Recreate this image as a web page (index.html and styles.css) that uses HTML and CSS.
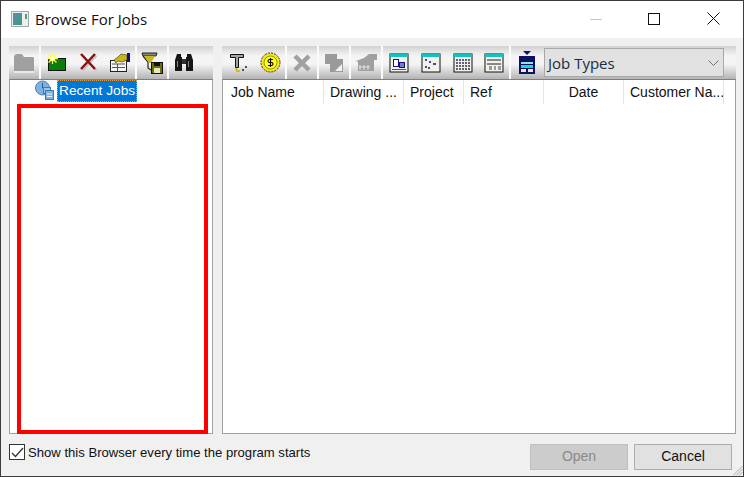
FILE: index.html
```html
<!DOCTYPE html>
<html lang="en">
<head>
<meta charset="utf-8">
<title>Browse For Jobs</title>
<link rel="stylesheet" href="styles.css">
</head>
<body>
<div class="window">
  <header class="titlebar">
    <svg class="app-icon" width="18" height="17" viewBox="0 0 18 17">
      <defs><linearGradient id="appgrad" x1="0" y1="0" x2="1" y2="1"><stop offset="0" stop-color="#5a8fb4"/><stop offset="1" stop-color="#3f9a78"/></linearGradient></defs>
      <rect x="0.5" y="0.500" width="17" height="15" fill="#eef0f0" stroke="#a4a8aa"/>
      <rect x="2" y="2" width="9" height="12" fill="url(#appgrad)"/>
      <rect x="14" y="3" width="2" height="5" fill="#49a088"/>
    </svg>
    <span class="title">Browse For Jobs</span>
    <div class="caption">
      <span class="cap-btn cap-min"><svg width="12" height="12" viewBox="0 0 12 12"><path d="M0 6.500h12" stroke="#c4c4c4"/></svg></span>
      <span class="cap-btn cap-max"><svg width="12" height="12" viewBox="0 0 12 12"><rect x="0.5" y="0.5" width="11" height="11" fill="none" stroke="#111"/></svg></span>
      <span class="cap-btn cap-close"><svg width="13" height="13" viewBox="0 0 13 13"><path d="M0.5 0.5l12 12M12.5 0.5l-12 12" stroke="#111" fill="none"/></svg></span>
    </div>
  </header>

  <main class="content">
    <div class="panes">
      <section class="pane pane-left">
        <div class="toolbar">
          <span class="tb tb-w32 sep"><svg width="22" height="20" viewBox="0 0 22 20"><path d="M1 18V3l2-2h6l2 3h9l1 1v13z" fill="#a0a0a0"/><path d="M1 19h20" stroke="#fff"/></svg></span>
          <span class="tb tb-w32"><svg width="20" height="19" viewBox="0 0 20 19"><rect x="1.500" y="5.500" width="17" height="12" fill="#0a7d0a" stroke="#111"/><path d="M5.500 0v11M0 5.500h11M1.500 1.500l8 8M9.500 1.500l-8 8" stroke="#ffff30" stroke-width="1.300"/><circle cx="5.500" cy="5.500" r="2.500" fill="#ffffd0"/></svg></span>
          <span class="tb tb-w32"><svg width="20" height="19" viewBox="0 0 20 19"><path d="M2 2l14 15M16 2L2 17" stroke="#c4c4c4" stroke-width="2.200" transform="translate(1.500 0.500)"/><path d="M2 1l14 15M16 1L2 16" stroke="#8a1010" stroke-width="2.400"/></svg></span>
          <span class="tb tb-w32 sep"><svg width="22" height="20" viewBox="0 0 22 20"><rect x="1.500" y="7.500" width="16" height="11" fill="#f4f4f4" stroke="#222"/><path d="M3 11h13M3 14.500h13M8.500 11v7" stroke="#555"/><path d="M5 7l4-3 3-3 6 1v5l-5 2-4-1-2 2z" fill="#c8b420" stroke="#5a4a00" stroke-width=".7"/><path d="M18 0h3v9h-3z" fill="#101080"/></svg></span>
          <span class="tb tb-w32 sep"><svg width="22" height="22" viewBox="0 0 22 22"><path d="M1 1h15l-1 3H2z" fill="#8a8a70" stroke="#222"/><path d="M2 4l5 6v6l3 2" fill="none" stroke="#222" stroke-width="1.200"/><path d="M3 4h11l-4 7H8z" fill="#c8b828"/><rect x="10.500" y="10.500" width="11" height="11" fill="#70700a" stroke="#111"/><rect x="13" y="11" width="6" height="3" fill="#111"/><rect x="13" y="16" width="6" height="5" fill="#e8e8c0"/></svg></span>
          <span class="tb tb-last"><svg width="20" height="19" viewBox="0 0 20 19"><path d="M3 1h4v3h1v14H1V7zM17 1h-4v3h-1v14h7V7z" fill="#161616"/><rect x="8" y="6" width="4" height="5" fill="#333"/><path d="M3.500 8v6M14.500 8v6" stroke="#888"/></svg></span>
        </div>
        <div class="tree">
          <div class="tree-row">
            <svg width="20" height="22" viewBox="0 0 20 22"><circle cx="7.500" cy="8" r="7" fill="#7fb2de" stroke="#4f82ba"/><path d="M7.500 3v5l3 2" stroke="#2f5f9a" fill="none"/><rect x="8.500" y="7.500" width="7" height="6" fill="#9cc4e8" stroke="#3f78b8"/><rect x="10.500" y="10.500" width="8" height="9" fill="#7fb2de" stroke="#3f78b8"/><path d="M12 14h5M12 16.500h5" stroke="#e8f2fa"/></svg>
            <span class="tree-label">Recent Jobs</span>
          </div>
          <div class="highlight"></div>
        </div>
      </section>

      <section class="pane pane-right">
        <div class="toolbar toolbar-right">
          <span class="tb tb-w32"><svg width="20" height="20" viewBox="0 0 20 20"><path d="M1.500 1.500h13v3h-5v10h-3v-10h-5z" fill="#a4a4a4" stroke="#111"/><path d="M7 15l1 3h3" stroke="#c8b800" stroke-width="1.600" fill="none"/><path d="M13 17h2M16 14h2" stroke="#222" stroke-width="1.400"/></svg></span>
          <span class="tb tb-w32 sep"><svg width="21" height="21" viewBox="0 0 21 21"><circle cx="10.500" cy="10.500" r="9.500" fill="#f4e818" stroke="#333" stroke-dasharray="2 1"/><circle cx="10.500" cy="10.500" r="6.500" fill="#ffff30" stroke="#9a9000"/><path d="M13 7.500H9.500a1.500 1.500 0 0 0 0 3h2a1.500 1.500 0 0 1 0 3H8M10.500 6v9" fill="none" stroke="#111" stroke-width="1.200"/></svg></span>
          <span class="tb tb-w32 sep"><svg width="20" height="18" viewBox="0 0 20 18"><path d="M3 2l14 14M17 2L3 16" stroke="#a0a0a0" stroke-width="4.500"/></svg></span>
          <span class="tb tb-w32 sep"><svg width="20" height="20" viewBox="0 0 20 20"><rect x="1" y="1" width="12" height="10" fill="#9a9a9a"/><rect x="6" y="6" width="13" height="13" fill="#9a9a9a"/><path d="M18 11v7h-7z" fill="#f2f2f2"/></svg></span>
          <span class="tb tb-w32 sep"><svg width="21" height="19" viewBox="0 0 21 19"><path d="M0 8l8-3 5-4h8v6h-3v11H2V9z" fill="#a0a0a0"/><path d="M4 12v5M8 12v5M12 12v5M3 14h11" stroke="#e4e4e4"/></svg></span>
          <span class="tb tb-w32"><svg width="20" height="20" viewBox="0 0 20 20"><rect x="1" y="1" width="18" height="18" fill="#f2f2ea" stroke="#111"/><rect x="1" y="1" width="18" height="3" fill="#18c0c0"/><rect x="4.500" y="6.500" width="5" height="7" fill="#fff" stroke="#101080"/><rect x="10.500" y="9.500" width="5" height="5" fill="#7080c0" stroke="#101080"/><path d="M3 16.500h14" stroke="#555"/></svg></span>
          <span class="tb tb-w32"><svg width="20" height="20" viewBox="0 0 20 20"><rect x="1" y="1" width="18" height="18" fill="#f2f2ea" stroke="#111"/><rect x="1" y="1" width="18" height="3" fill="#18c0c0"/><path d="M4 7h2M4 14h2M8 9h2M12 11h3M7 15h2" stroke="#101080" stroke-width="1.600"/></svg></span>
          <span class="tb tb-w32"><svg width="20" height="20" viewBox="0 0 20 20"><rect x="1" y="1" width="18" height="18" fill="#f2f2ea" stroke="#111"/><rect x="1" y="1" width="18" height="3" fill="#18c0c0"/><path d="M3 7h14M3 10h14M3 13h14M3 16h14" stroke="#303050" stroke-width="1.500" stroke-dasharray="2 1"/></svg></span>
          <span class="tb tb-w32 sep"><svg width="20" height="20" viewBox="0 0 20 20"><rect x="1" y="1" width="18" height="18" fill="#f2f2ea" stroke="#111"/><rect x="1" y="1" width="18" height="3" fill="#18c0c0"/><path d="M3 7h14M3 11h14" stroke="#666" stroke-width="1.500"/><path d="M5 14h3M10 14h2M14 14h3M5 16h3M10 16h2M14 16h3" stroke="#444"/></svg></span>
          <span class="tb tb-w32"><svg width="18" height="24" viewBox="0 0 18 24"><path d="M5 0h8l-4 4z" fill="#101080"/><rect x="1" y="5" width="16" height="18" fill="#101060"/><rect x="3" y="11" width="12" height="2" fill="#8ae8e8"/><rect x="3" y="14" width="12" height="3" fill="#18d8d8"/><rect x="3" y="18" width="5" height="3" fill="#e8e8e8"/><rect x="10" y="18" width="5" height="3" fill="#e8e8e8"/></svg></span>
          <div class="combo">
            <span class="combo-text">Job Types</span>
            <svg width="11" height="6" viewBox="0 0 11 6"><path d="M0.500 0.500l5 5 5-5" fill="none" stroke="#707070"/></svg>
          </div>
        </div>
        <div class="list">
          <div class="list-head">
            <span class="col col-name">Job Name</span>
            <span class="col col-drawing">Drawing ...</span>
            <span class="col col-project">Project</span>
            <span class="col col-ref">Ref</span>
            <span class="col col-date">Date</span>
            <span class="col col-customer">Customer Na...</span>
          </div>
        </div>
      </section>
    </div>

    <footer class="footer">
      <label class="check">
        <span class="box"><svg width="13" height="11" viewBox="0 0 13 11"><path d="M1 6l3.500 3.500L12 1" fill="none" stroke="#333" stroke-width="1.300"/></svg></span>
        <span>Show this Browser every time the program starts</span>
      </label>
      <div class="actions">
        <span class="btn btn-disabled">Open</span>
        <span class="btn">Cancel</span>
      </div>
    </footer>
    <svg class="grip" width="12" height="12" viewBox="0 0 12 12"><path d="M11.500 2L2 11.500M11.500 5L5 11.500M11.500 8L8 11.500" stroke="#a8a8a8"/></svg>
  </main>
</div>
</body>
</html>
```

FILE: styles.css
```css
* { box-sizing: border-box; }

html, body {
  margin: 0;
  height: 100%;
  overflow: hidden;
}

.window {
  width: 744px;
  height: 477px;
  display: flex;
  flex-direction: column;
  border: 1px solid #3c3c3c;
  background: #f0f0f0;
  font-family: "Liberation Sans", Arial, sans-serif;
  font-size: 14px;
  color: #111;
}

.titlebar {
  flex: 0 0 37px;
  display: flex;
  align-items: center;
  background: #fff;
  padding-left: 10px;
}

.app-icon { flex: none; margin-right: 6px; }

.title {
  font-family: "Open Sans", sans-serif;
  font-size: 15px;
  color: #111;
  margin-bottom: 2px;
}

.caption {
  margin-left: auto;
  display: flex;
  height: 100%;
  padding-bottom: 2px;
}

.cap-btn {
  display: flex;
  align-items: center;
  justify-content: center;
}

.cap-min { width: 59px; }
.cap-max { width: 58px; }
.cap-close { width: 60px; }

.content {
  position: relative;
  flex: 1;
  display: flex;
  flex-direction: column;
  padding: 8px 7px 0 8px;
}

.panes {
  display: flex;
  gap: 9px;
  height: 388px;
}

.pane { display: flex; flex-direction: column; }
.pane-left { width: 204px; }
.pane-right { width: 514px; }

.toolbar {
  flex: 0 0 33px;
  display: flex;
  align-items: center;
  background: linear-gradient(#d2d2d2 0, #f4f4f4 30%, #f4f4f4 55%, #b4b4b4 100%);
}

.toolbar-right { padding-left: 1px; }

.tb {
  height: 100%;
  display: flex;
  align-items: center;
  justify-content: center;
  flex: none;
}

.tb-w32 { width: 32px; }
.tb-last { width: 30px; }
.sep { border-right: 2px solid #fbfbfb; }

.tree {
  position: relative;
  flex: 1;
  background: #fff;
  border: 1px solid #a0a0a0;
  border-top-color: #808080;
}

.tree-row {
  display: flex;
  align-items: center;
  height: 22px;
  padding-left: 25px;
  gap: 2px;
}

.tree-label {
  background: #0078d7;
  color: #fff;
  font-size: 13.7px;
  height: 22px;
  line-height: 22px;
  padding: 0 2px;
  outline: 1px dotted #e8a040;
  outline-offset: -1px;
}

.highlight {
  position: absolute;
  left: 7px;
  top: 24px;
  width: 191px;
  height: 330px;
  border: 4px solid #f00;
}

.combo {
  flex: 0 0 180px;
  height: 29px;
  margin-left: 1px;
  display: flex;
  align-items: center;
  justify-content: space-between;
  padding: 0 4px 0 3px;
  background: #e1e1e1;
  border: 1px solid #a8a8a8;
  font-family: "Open Sans", sans-serif;
  font-size: 15px;
  color: #1a2a44;
}

.list {
  flex: 1;
  background: #fff;
  border: 1px solid #a0a0a0;
  border-top-color: #808080;
}

.list-head {
  display: flex;
  height: 24px;
  align-items: center;
}

.col {
  flex: none;
  height: 24px;
  line-height: 24px;
  padding-left: 6px;
  border-right: 1px solid #e4e4e4;
  white-space: nowrap;
  overflow: hidden;
}

.col-name { width: 101px; padding-left: 8px; }
.col-drawing { width: 80px; }
.col-project { width: 60px; }
.col-ref { width: 80px; }
.col-date { width: 80px; padding-left: 0; text-align: center; }
.col-customer { width: 100px; }

.footer {
  flex: 1;
  display: flex;
  align-items: flex-start;
  justify-content: space-between;
  padding-top: 9px;
}

.check {
  display: flex;
  align-items: center;
  gap: 3px;
  height: 18px;
  font-size: 13.1px;
}

.box {
  width: 16px;
  height: 16px;
  border: 1px solid #333;
  background: #fff;
  display: flex;
  align-items: center;
  justify-content: center;
}

.actions {
  display: flex;
  gap: 6px;
  margin-right: 4px;
  margin-top: 1px;
}

.btn {
  width: 98px;
  height: 26px;
  padding-bottom: 2px;
  display: flex;
  align-items: center;
  justify-content: center;
  background: #e1e1e1;
  border: 1px solid #adadad;
}

.btn-disabled {
  background: #cccccc;
  border-color: #bfbfbf;
  color: #8a8a8a;
}

.grip {
  position: absolute;
  right: 0;
  bottom: 0;
}
```
